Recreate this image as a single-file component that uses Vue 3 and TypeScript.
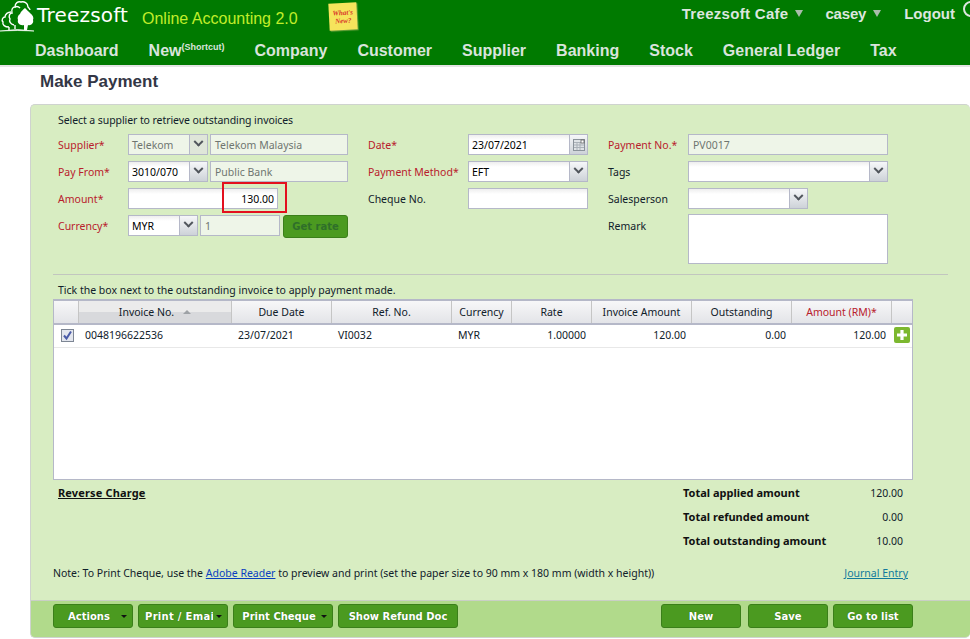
<script setup lang="ts">
interface Col { label: string; width: number; align: string; req?: boolean; val: string }
const cols: Col[] = [
  { label: 'Invoice No.', width: 153, align: 'left', val: '0048196622536' },
  { label: 'Due Date', width: 100, align: 'left', val: '23/07/2021' },
  { label: 'Ref. No.', width: 120, align: 'left', val: 'VI0032' },
  { label: 'Currency', width: 60, align: 'left', val: 'MYR' },
  { label: 'Rate', width: 80, align: 'right', val: '1.00000' },
  { label: 'Invoice Amount', width: 100, align: 'right', val: '120.00' },
  { label: 'Outstanding', width: 100, align: 'right', val: '0.00' },
  { label: 'Amount (RM)*', width: 100, align: 'right', req: true, val: '120.00' }
]
const nav = ['Company', 'Customer', 'Supplier', 'Banking', 'Stock', 'General Ledger', 'Tax']
const totals = [
  ['Total applied amount', '120.00'],
  ['Total refunded amount', '0.00'],
  ['Total outstanding amount', '10.00']
]
</script>

<template>
  <div class="page">
    <header class="head">
      <div class="top">
        <svg class="logo" width="37" height="33" viewBox="0 0 37 33">
          <path d="M0 31 Q18 28 34 31 Q18 30 0 31Z" fill="#fff" stroke="#fff" stroke-width=".6" />
          <g fill="none" stroke="#fff" stroke-width="1.400">
            <path d="M9 27 C5 27 2 25 3 22 C1 20 3 17 5 17 C5 14 8 12 11 12" />
            <path d="M14 25 C10 24 9 21 10 19 C8 16 10 13 12 13 C11 9 13 7 15 7 C15 3 18 1 21 2 C24 1 28 3 28 7 C29 8 30 9 30 10" />
            <path d="M15 7 C17 6 19 7 20 8" />
            <path d="M9 27 V30 M15 25 V29" />
          </g>
          <path d="M25 8 C27 10 29 12 30 13 C33 15 34 18 33 20 C34 23 31 26 28 25 L27 30 L24 30 L24 25 C20 26 17 23 18 20 C17 18 18 15 20 14 C21 11 23 10 25 8Z" fill="#fff" />
        </svg>
        <span class="brand">Treezsoft</span>
        <span class="product">Online Accounting 2.0</span>
        <div class="note"><span>What's<br />New?</span></div>
        <div class="user">
          <span class="u1">Treezsoft Cafe</span><i class="tri"></i>
          <span class="u2">casey</span><i class="tri"></i>
          <span class="u3">Logout</span>
        </div>
        <span class="help"></span>
      </div>
      <nav class="nav">
        <span>Dashboard</span>
        <span>New<sup>(Shortcut)</sup></span>
        <span v-for="n in nav" :key="n">{{ n }}</span>
      </nav>
    </header>

    <h1 class="title">Make Payment</h1>

    <section class="panel">
      <div class="body">
        <p class="hint h1">Select a supplier to retrieve outstanding invoices</p>
        <div class="form">
          <div class="col c1">
            <div class="row">
              <label class="req">Supplier*</label>
              <div class="sel dis w80"><span>Telekom</span><b class="arrow"></b></div>
              <div class="inp dis w138">Telekom Malaysia</div>
            </div>
            <div class="row">
              <label class="req">Pay From*</label>
              <div class="sel w80"><span>3010/070</span><b class="arrow"></b></div>
              <div class="inp dis w138">Public Bank</div>
            </div>
            <div class="row">
              <label class="req">Amount*</label>
              <div class="inp amt">130.00</div>
              <span class="redbox"></span>
            </div>
            <div class="row">
              <label class="req">Currency*</label>
              <div class="sel w70"><span>MYR</span><b class="arrow"></b></div>
              <div class="inp dis w80b">1</div>
              <button class="btn rate">Get rate</button>
            </div>
          </div>
          <div class="col c2">
            <div class="row">
              <label class="req">Date*</label>
              <div class="sel w120"><span>23/07/2021</span><b class="cal">
                <svg width="12" height="12" viewBox="0 0 12 12"><rect x=".5" y=".5" width="11" height="11" fill="#dfe3e6" stroke="#8b939b" /><path d="M1 3.500h10M1 6h10M1 8.500h10M4 3v8M7 3v8" stroke="#aab1b8" /><rect x="8" y="1" width="3" height="3" fill="#fff" stroke="#555" stroke-width=".7" /></svg>
              </b></div>
            </div>
            <div class="row">
              <label class="req">Payment Method*</label>
              <div class="sel w120"><span>EFT</span><b class="arrow"></b></div>
            </div>
            <div class="row">
              <label>Cheque No.</label>
              <div class="inp w120"></div>
            </div>
          </div>
          <div class="col c3">
            <div class="row">
              <label class="req">Payment No.*</label>
              <div class="inp dis w200">PV0017</div>
            </div>
            <div class="row">
              <label>Tags</label>
              <div class="sel w200"><span></span><b class="arrow"></b></div>
            </div>
            <div class="row">
              <label>Salesperson</label>
              <div class="sel w120"><span></span><b class="arrow"></b></div>
            </div>
            <div class="row tall">
              <label>Remark</label>
              <div class="inp w200 area"></div>
            </div>
          </div>
        </div>

        <hr class="rule" />
        <p class="hint h2">Tick the box next to the outstanding invoice to apply payment made.</p>

        <div class="grid">
          <div class="ghead">
            <div class="th chk"></div>
            <div v-for="(c, i) in cols" :key="c.label" class="th" :class="{ sorted: i === 0, red: c.req }" :style="{ width: c.width + 'px' }">
              {{ c.label }}<i v-if="i === 0" class="up"></i>
            </div>
            <div class="th last"></div>
          </div>
          <div class="grow">
            <div class="td chk">
              <svg width="13" height="13" viewBox="0 0 13 13"><rect x=".5" y=".5" width="12" height="12" fill="#e3e6ee" stroke="#7d8694" /><path d="M3 6.500l2.500 3L10 2.500" fill="none" stroke="#4a5ba8" stroke-width="2" /></svg>
            </div>
            <div v-for="c in cols" :key="c.label" class="td" :style="{ width: c.width + 'px', textAlign: c.align === 'right' ? 'right' : 'left' }">{{ c.val }}</div>
            <div class="td last">
              <svg width="16" height="16" viewBox="0 0 16 16"><rect width="16" height="16" rx="2" fill="#7cb82f" /><path d="M8 3v10M3 8h10" stroke="#fff" stroke-width="3.200" /></svg>
            </div>
          </div>
        </div>

        <div class="sums">
          <a class="rev">Reverse Charge</a>
          <div class="tots">
            <div v-for="t in totals" :key="t[0]" class="tot"><b>{{ t[0] }}</b><span>{{ t[1] }}</span></div>
          </div>
        </div>

        <div class="noteline">
          <span>Note: To Print Cheque, use the <a class="lnk">Adobe Reader</a> to preview and print (set the paper size to 90 mm x 180 mm (width x height))</span>
          <a class="journal">Journal Entry</a>
        </div>
      </div>

      <footer class="foot">
        <button class="btn b1">Actions<i class="dd"></i></button>
        <button class="btn b2"><span class="clip">Print / Email</span><i class="dd"></i></button>
        <button class="btn b3">Print Cheque<i class="dd"></i></button>
        <button class="btn b4">Show Refund Doc</button>
        <span class="sp"></span>
        <button class="btn b5">New</button>
        <button class="btn b5">Save</button>
        <button class="btn b5 ml">Go to list</button>
      </footer>
    </section>
  </div>
</template>

<style>
html, body { margin: 0; background: #fff; overflow: hidden; }
</style>

<style scoped>
.page { width: 970px; height: 639px; overflow: hidden; font: 10.500px "Noto Sans", sans-serif; color: #10202a; position: relative; }
.head { background: #007a00; height: 65px; border-bottom: 2px solid #e4e4e4; }
.top { height: 38px; display: flex; align-items: flex-start; position: relative; }
.logo { flex: none; }
.brand { font: 400 20px/30px "DejaVu Sans", sans-serif; color: #fff; letter-spacing: .2px; width: 105px; }
.product { font: 16px/37px "Liberation Sans", sans-serif; color: #c0ee2b; width: 187px; }
.note { width: 28px; height: 27px; margin-top: 3px; background: #f6e45c; transform: rotate(-3deg); font: italic 700 7px/8px "Liberation Serif", serif; color: #d8352a; text-align: center; display: flex; align-items: center; justify-content: center; box-shadow: 1px 1px 1px #69a03c; }
.user { margin-left: auto; margin-right: 15px; display: flex; align-items: center; height: 27px; font: 700 15px "Liberation Sans", sans-serif; color: #dce6de; }
.u1 { letter-spacing: .3px; }
.u2 { margin-left: 22px; letter-spacing: -.2px; }
.u3 { margin-left: 23px; }
.tri { width: 0; height: 0; border: 4.500px solid transparent; border-top: 7px solid #a9bdaa; border-bottom: 0; margin-left: 7px; }
.help { position: absolute; right: -9px; top: 1px; width: 12px; height: 12px; border: 2px solid #dce6de; border-radius: 50%; }
.nav { display: flex; font: 700 16px/26px "Liberation Sans", sans-serif; color: #d9e4dc; padding-left: 35px; gap: 30px; }
.nav sup { font-size: 9px; line-height: 0; vertical-align: 6px; }
.title { margin: 0; height: 37px; padding-left: 40px; font: 700 17px/30px "Liberation Sans", sans-serif; color: #333645; }
.panel { margin-left: 30px; width: 940px; height: 534px; box-sizing: border-box; border: 1px solid #cfd3cf; border-right: 0; border-radius: 5px; background: #d8edc2; display: flex; flex-direction: column; overflow: hidden; }
.body { flex: 1; padding-left: 22px; position: relative; }
.hint { margin: 0 0 0 5px; line-height: 14px; padding-top: 8px; color: #10202a; }
.h1 { letter-spacing: -.08px; }
.form { display: flex; padding: 7px 0 0 5px; height: 147px; box-sizing: border-box; }
.col { display: flex; flex-direction: column; gap: 6px; }
.c1 { width: 310px; }
.c2 { width: 240px; }
.c3 { width: 290px; }
.row { display: flex; height: 21px; gap: 2px; position: relative; flex: none; }
.row.tall { height: 50px; margin-top: -1px; }
.row.tall label { padding-top: 1px; }
label { flex: none; line-height: 22px; color: #10202a; }
.c1 label { width: 68px; }
.c2 label { width: 98px; }
.c3 label { width: 78px; }
label.req { color: #b8202c; }
.inp, .sel { box-sizing: border-box; border: 1px solid #b5b8c8; background: linear-gradient(#eeeeee, #fff 5px); line-height: 20px; padding: 0 3px; color: #000; flex: none; white-space: nowrap; height: 21px; }
.inp.dis, .sel.dis { background: #eef5e8; color: #6f7570; }
.inp.dis { padding-left: 4px; }
.sel { display: flex; padding: 0; position: relative; }
.sel span { flex: 1; padding-left: 3px; }
.arrow, .cal { width: 17px; flex: none; background: linear-gradient(#f6f7f9, #cdd2d8); border-left: 1px solid #b5b8c8; position: relative; display: flex; align-items: center; justify-content: center; }
.arrow::after { content: ""; width: 5px; height: 5px; border: solid #50555c; border-width: 0 2px 2px 0; transform: rotate(45deg) translate(-2px, -2px); }
.dis .arrow { background: #dfe6d9; }
.w80 { width: 80px; }
.w138 { width: 138px; }
.w70 { width: 70px; }
.w80b { width: 80px; }
.w120 { width: 120px; }
.w200 { width: 200px; }
.amt { width: 150px; text-align: right; padding-right: 3px; }
.area { height: 50px; background: #fff; }
.redbox { position: absolute; left: 164px; top: -6px; width: 61px; height: 27px; border: 2px solid #e3101e; pointer-events: none; }
.rule { border: 0; border-top: 1px solid #c2c6bf; margin: 0; width: 895px; }
.h2 { padding-top: 9px; height: 12px; line-height: 12px; padding-bottom: 3px; }
.grid { width: 860px; height: 181px; box-sizing: border-box; border: 1px solid #b5b8c8; border-top: 2px solid #b5b8c8; background: #fff; }
.ghead { display: flex; height: 22px; border-bottom: 2px solid #b5b8c8; background: linear-gradient(#f7f7f8, #e3e4e8); }
.th { box-sizing: border-box; border-right: 1px solid #c5c5c5; text-align: center; line-height: 22px; flex: none; position: relative; }
.chk { width: 25px; flex: none; }
.last { width: 20px; flex: none; border-right: 0; }
.sorted { background: linear-gradient(#ebebeb 50%, #d8d9dc 50%); }
.red { color: #b8202c; }
.up { display: inline-block; width: 0; height: 0; border: 4px solid transparent; border-bottom: 4px solid #9ea2a6; border-top: 0; margin-left: 9px; vertical-align: 2px; }
.grow { display: flex; height: 22px; border-bottom: 1px solid #e8e8e8; line-height: 21px; color: #10202a; }
.td { box-sizing: border-box; padding: 0 6px; flex: none; }
.td.chk { padding: 4px 0 0 7px; width: 25px; display: block; line-height: 0; }
.td.last { padding: 2px 0 0 2px; line-height: 0; }
.sums { display: flex; justify-content: space-between; width: 850px; padding-left: 5px; padding-top: 6px; height: 80px; box-sizing: border-box; }
.rev { font-weight: 700; font-size: 11px; letter-spacing: .15px; text-decoration: underline; color: #111; line-height: 14px; }
.tots { width: 220px; display: flex; flex-direction: column; gap: 10px; }
.tot { display: flex; justify-content: space-between; line-height: 14px; }
.tot b { color: #111; font-size: 11px; }
.noteline { width: 855px; display: flex; justify-content: space-between; height: 30px; padding-top: 6px; box-sizing: border-box; line-height: 14px; }
.lnk { color: #0a3fc0; text-decoration: underline; }
.journal { color: #127a9c; text-decoration: underline; }
.foot { height: 37px; flex: none; background: #b1da8b; border-top: 1px solid #c9cfc5; display: flex; align-items: flex-start; padding: 3px 57px 0 22px; gap: 5px; box-sizing: border-box; }
.sp { flex: 1; }
.btn { height: 24px; box-sizing: border-box; background: #4b9a20; border: 1px solid #3b7f1a; border-radius: 3px; color: #fff; font: 700 10px "DejaVu Sans", sans-serif; padding: 0; position: relative; text-shadow: 0 0 1px #2b6a0f; text-align: center; white-space: nowrap; flex: none; }
.rate { width: 65px; height: 23px; color: #2f6f2a; margin-left: 1px; text-shadow: none; }
.dd { position: absolute; right: 5px; top: 10px; width: 0; height: 0; border: 3px solid transparent; border-top: 3px solid #111; border-bottom: 0; }
.b1 { width: 80px; padding-right: 8px; }
.b2 { width: 90px; text-align: left; padding-left: 6px; }
.clip { display: inline-block; width: 68px; overflow: hidden; vertical-align: middle; letter-spacing: .3px; }
.b3 { width: 100px; padding-right: 8px; }
.b4 { width: 120px; }
.b5 { width: 80px; margin-left: 2px; }
.ml { margin-left: 0; }
</style>
